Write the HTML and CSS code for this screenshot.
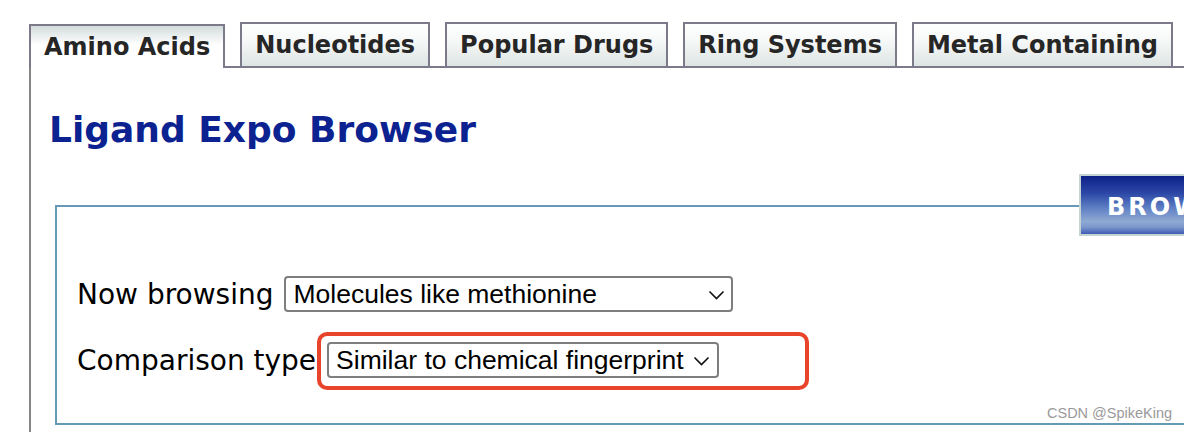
FILE: index.html
```html
<!DOCTYPE html>
<html lang="en">
<head>
<meta charset="utf-8">
<title>Ligand Expo Browser</title>
<link rel="stylesheet" href="styles.css">
</head>
<body>
<div class="page">
  <nav class="tabs">
    <div class="tab active">Amino Acids</div>
    <div class="tab">Nucleotides</div>
    <div class="tab">Popular Drugs</div>
    <div class="tab">Ring Systems</div>
    <div class="tab">Metal Containing</div>
  </nav>
  <div class="panel">
    <h1 class="title">Ligand Expo Browser</h1>
    <div class="browse-box">
      <div class="browse-btn">BROWSE</div>
      <div class="row">
        <label class="label">Now browsing</label>
        <span class="select-wrap wide">
          <select class="select"><option>Molecules like methionine</option></select>
          <svg class="chev" width="17" height="10" viewBox="0 0 17 10"><polyline points="1.5,1.5 8.5,8.5 15.5,1.5" fill="none" stroke="#111" stroke-width="1.6"/></svg>
        </span>
      </div>
      <div class="row">
        <label class="label">Comparison type</label>
        <span class="select-wrap narrow">
          <select class="select"><option>Similar to chemical fingerprint</option></select>
          <svg class="chev" width="17" height="10" viewBox="0 0 17 10"><polyline points="1.5,1.5 8.5,8.5 15.5,1.5" fill="none" stroke="#111" stroke-width="1.6"/></svg>
          <span class="highlight"></span>
        </span>
      </div>
      <div class="watermark">CSDN @SpikeKing</div>
    </div>
  </div>
</div>
</body>
</html>
```
FILE: styles.css
```css
html, body {
  margin: 0;
  padding: 0;
  overflow: hidden;
  background: #ffffff;
}

.page {
  padding-left: 29px;
  width: 1500px;
  font-family: "DejaVu Sans", Verdana, sans-serif;
}

.tabs {
  display: flex;
  align-items: flex-end;
  gap: 15px;
  padding-top: 22px;
  position: relative;
  z-index: 2;
}

.tab {
  box-sizing: border-box;
  height: 44px;
  padding: 0 13px;
  border: 2px solid #7c7a8a;
  border-bottom: none;
  background: linear-gradient(to bottom, #ffffff 0%, #f6f8f8 40%, #dde5e3 100%);
  color: #262626;
  font-weight: bold;
  font-size: 24px;
  line-height: 42px;
  white-space: nowrap;
}

.tab.active {
  margin-bottom: -2px;
  background: linear-gradient(to bottom, #d3dcdb 0%, #ffffff 45%, #ffffff 100%);
}

.panel {
  border-left: 2px solid #858585;
  border-top: 2px solid #7c7a8a;
  padding: 0 0 60px 18px;
}

.title {
  margin: 41px 0 0 0;
  font-size: 36px;
  line-height: 42px;
  font-weight: bold;
  color: #0b2290;
}

.browse-box {
  position: relative;
  margin: 54px 0 0 6px;
  border: 2px solid #6699b6;
  padding: 69px 0 45px 20px;
  display: flex;
  flex-direction: column;
  gap: 30px;
}

.browse-btn {
  position: absolute;
  left: 1022px;
  top: -33px;
  width: 200px;
  box-sizing: content-box;
  border: 2px solid #c3d4d2;
  padding: 5px 0 0 26px;
  line-height: 53px;
  height: 53px;
  background: linear-gradient(to bottom, #0d2189 0%, #2c48a6 30%, #5f7fc4 55%, #8eaad3 78%, #7c98cc 88%, #3f5bb5 100%);
  color: #ffffff;
  font-weight: bold;
  font-size: 24px;
  letter-spacing: 3px;
}

.row {
  display: flex;
  align-items: center;
  gap: 11px;
}

.label {
  font-size: 28px;
  color: #000000;
  white-space: nowrap;
}

.select-wrap {
  position: relative;
  display: inline-block;
}

.select-wrap.wide { width: 449px; }
.select-wrap.narrow { width: 392px; }

.select {
  -webkit-appearance: none;
  appearance: none;
  box-sizing: border-box;
  width: 100%;
  height: 36px;
  margin: 0;
  padding: 0 0 0 7px;
  border: 2px solid #7e7e7e;
  border-radius: 4px;
  background: #ffffff;
  color: #000000;
  font-family: "Liberation Sans", Arial, Helvetica, sans-serif;
  font-size: 26.5px;
  line-height: 32px;
}

.chev {
  position: absolute;
  right: 8px;
  top: 14px;
  pointer-events: none;
}

.select-wrap.narrow .chev {
  right: 9px;
}

.highlight {
  position: absolute;
  left: -10px;
  top: -10px;
  width: 492px;
  height: 58px;
  box-sizing: border-box;
  border: 4px solid #e8432b;
  border-radius: 10px;
  pointer-events: none;
}

.watermark {
  position: absolute;
  left: 990px;
  top: 198px;
  font-family: "Liberation Sans", Arial, sans-serif;
  font-size: 14.5px;
  color: #9a9a9a;
  white-space: nowrap;
}
```
